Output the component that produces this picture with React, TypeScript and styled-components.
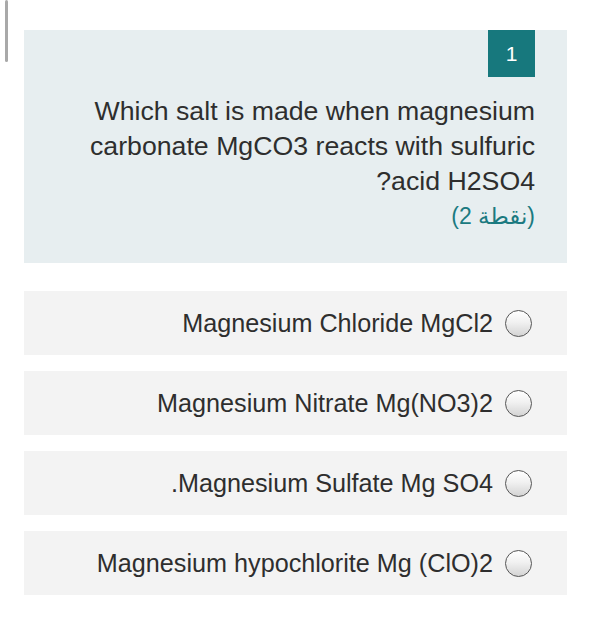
import React from 'react';
import styled, {createGlobalStyle} from 'styled-components';

const GlobalStyle = createGlobalStyle`
    html, body {
        margin: 0;
        padding: 0;
        background: #ffffff;
    }
    body {
        font-family: "Liberation Sans", "DejaVu Sans", Arial, sans-serif;
        color: #333333;
    }
`;

const Page = styled.div`
    position: relative;
    width: 591px;
    height: 642px;
    padding: 30px 24px 0 24px;
    box-sizing: border-box;
    display: flex;
    flex-direction: column;
    gap: 28px;
`;

// thin scroll indicator on the left edge
const ScrollMark = styled.div`
    position: absolute;
    left: 5px;
    top: 0;
    width: 3px;
    height: 62px;
    border-radius: 2px;
    background: #a9a9a9;
`;

const QuestionCard = styled.section`
    background: #e7eef0;
    padding: 0 32px 30px 40px;
    display: flex;
    flex-direction: column;
    align-items: flex-end;
`;

const Badge = styled.div`
    width: 47px;
    height: 47px;
    background: #17787d;
    color: #ffffff;
    font-size: 21px;
    display: flex;
    align-items: center;
    justify-content: center;
`;

const QuestionText = styled.div`
    margin-top: 17px;
    align-self: stretch;
    direction: rtl;
    text-align: right;
    font-size: 26.7px;
    line-height: 35px;
    color: #2e2e2e;
`;

// laid out as separate pieces so the number stays left of the word
const Points = styled.div`
    direction: ltr;
    display: flex;
    align-items: baseline;
    font-size: 23px;
    line-height: 34px;
    color: #1b7a80;
    white-space: pre;
`;

const Options = styled.div`
    display: flex;
    flex-direction: column;
    gap: 16px;
`;

const OptionRow = styled.label`
    height: 64px;
    background: #f3f3f3;
    direction: rtl;
    display: flex;
    align-items: center;
    gap: 12px;
    padding: 0 35px;
    font-size: 25.2px;
    color: #2e2e2e;
`;

const Radio = styled.span`
    width: 25px;
    height: 25px;
    flex: none;
    border-radius: 50%;
    border: 1.5px solid #555555;
    background: linear-gradient(#ffffff 0%, #f1f1f1 45%, #d4d4d4 100%);
`;

const answers = [
    'Magnesium Chloride MgCl2',
    'Magnesium Nitrate Mg(NO3)2',
    'Magnesium Sulfate Mg SO4.',
    'Magnesium hypochlorite Mg (ClO)2',
];

// "نقطة" (point)
const pointWord = '\u0646\u0642\u0637\u0629';

export default function App() {
    return (
        <>
            <GlobalStyle/>
            <Page>
                <ScrollMark/>
                <QuestionCard>
                    <Badge>{'1'}</Badge>
                    <QuestionText>
                        {'Which salt is made when magnesium carbonate MgCO3 reacts with sulfuric acid H2SO4?'}
                    </QuestionText>
                    <Points>
                        <span>{'(2 '}</span>
                        <span>{pointWord}</span>
                        <span>{')'}</span>
                    </Points>
                </QuestionCard>
                <Options>
                    {answers.map((a) => (
                        <OptionRow key={a}>
                            <Radio/>
                            <span>{a}</span>
                        </OptionRow>
                    ))}
                </Options>
            </Page>
        </>
    );
}
